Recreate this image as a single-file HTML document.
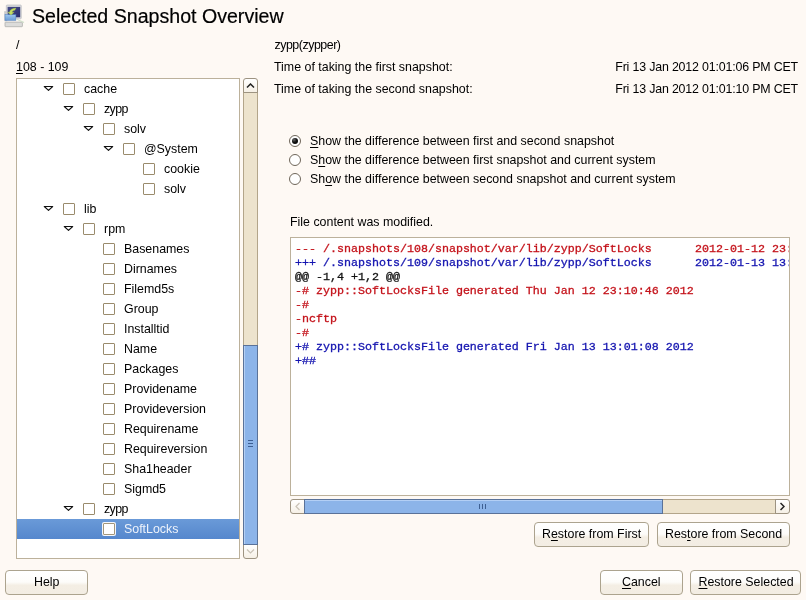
<!DOCTYPE html>
<html><head><meta charset="utf-8">
<style>
*{margin:0;padding:0;box-sizing:border-box}
html,body{width:806px;height:600px;overflow:hidden;background:#fef9f4}
body{will-change:transform}
body{position:relative;font-family:"Liberation Sans",sans-serif;font-size:12.4px;color:#000}
.a{position:absolute;white-space:pre;line-height:1}
.u{text-decoration:underline;text-underline-offset:2px}
#title{left:32px;top:7px;font-size:19.6px;color:#000;-webkit-text-stroke:0.2px #000}
#tree{position:absolute;left:16px;top:78px;width:224px;height:481px;border:1px solid #bcb19b;background:#fff;overflow:hidden}
.row{position:absolute;left:0;width:222px;height:20px}
.row.sel{background:linear-gradient(#6a9ad8,#5587cd)}
.cb{position:absolute;top:4px;width:12px;height:12px;border:1px solid #9a8b6c;border-radius:1px;background:#fff}
.sel .cb{border-color:#a3967a;background:#fff;box-shadow:0 0 0 1px #f4f6fb}
.ex{position:absolute;top:5px}
.tx{position:absolute;top:3px;line-height:14px;white-space:pre}
.sel .tx{color:#eef3fb}
#vsb{position:absolute;left:243px;top:78px;width:15px;height:481px}
.trough{position:absolute;background:#ede3cd;border:1px solid #b3a58a}
.thumb{position:absolute;background:#8cb4e9;border:1px solid #5a7299}
#vsb .thumb{box-shadow:inset 1px 0 0 #b3cff5}
#hsb .thumb{box-shadow:inset 0 1px 0 #b3cff5}
.arrowbtn{position:absolute;background:linear-gradient(#fff,#f6f0e6);border:1px solid #9d9381}
.radio{position:absolute;width:12px;height:12px;border-radius:50%;border:1px solid #6f665a;background:#fff}
.radio.on:after{content:"";position:absolute;left:2px;top:2px;width:6px;height:6px;border-radius:50%;background:radial-gradient(circle at 35% 30%,#666 0,#111 45%,#000 100%)}
#diff{position:absolute;left:290px;top:237px;width:500px;height:259px;border:1px solid #bcb19b;background:#fff;overflow:hidden}
.dl{position:absolute;left:4px;font-family:"Liberation Mono",monospace;font-size:11.67px;line-height:14px;white-space:pre;-webkit-text-stroke:0.3px currentColor}
.r{color:#c4121a}.b{color:#1414b0}.k{color:#111}
.btn{position:absolute;height:25px;border:1px solid #aca38e;border-radius:4px;background:linear-gradient(#fff 0%,#fdfcfa 48%,#f4eee4 62%,#f3ede3 100%)}
.btn>span{position:absolute;white-space:pre;line-height:1}
</style></head><body>

<svg class="a" style="left:0;top:0" width="30" height="30" viewBox="0 0 30 30">
  <defs>
    <linearGradient id="scr" x1="0" y1="0" x2="1" y2="1"><stop offset="0" stop-color="#454a88"/><stop offset="1" stop-color="#2a2e6c"/></linearGradient>
    <linearGradient id="fold" x1="0" y1="0" x2="0" y2="1"><stop offset="0" stop-color="#9cc6ee"/><stop offset="1" stop-color="#6a9ad4"/></linearGradient>
  </defs>
  <rect x="6.3" y="5" width="15" height="13.8" rx="0.8" fill="#d9dadc" stroke="#b4b6ba" stroke-width="0.6"/>
  <rect x="7.6" y="6.9" width="12.6" height="10.4" fill="url(#scr)"/>
  <rect x="4.2" y="11.2" width="3" height="10" fill="#c9cacc"/>
  <rect x="5" y="14.7" width="10.9" height="5.7" fill="url(#fold)" stroke="#4f80bf" stroke-width="0.5"/>
  <path d="M9.6 12.2 C9.8 10 11.5 8.6 16 8 L14.9 10.2 C13 10.4 12.3 11.2 12.2 12.2 L14.2 12.2 L11 15 L7.6 12.2 Z" fill="#c2dc62" stroke="#a4c048" stroke-width="0.3"/>
  <rect x="5" y="22.1" width="17.4" height="4.6" rx="0.6" fill="#dcdcda" stroke="#a7a7a5" stroke-width="0.7"/>
  <path d="M16.5 19 L19.5 20.5 L24 22.5" stroke="#cfe0c8" stroke-width="1.3" fill="none"/>
</svg>
<div id="title" class="a">Selected Snapshot Overview</div>

<div class="a" style="left:16px;top:39px">/</div>
<div class="a" style="left:16px;top:60.5px"><span class="u">1</span>08 - 109</div>

<div id="tree">
<div class="row" style="top:0px"><svg class="ex" style="left:25px" width="12" height="8" viewBox="0 0 12 8"><path d="M2.3 2.5 L10.7 2.5 L6.5 6.4 Z" fill="none" stroke="#111" stroke-width="1.15" stroke-linejoin="round"/></svg><div class="cb" style="left:46px"></div><div class="tx" style="left:67px">cache</div></div>
<div class="row" style="top:20px"><svg class="ex" style="left:45px" width="12" height="8" viewBox="0 0 12 8"><path d="M2.3 2.5 L10.7 2.5 L6.5 6.4 Z" fill="none" stroke="#111" stroke-width="1.15" stroke-linejoin="round"/></svg><div class="cb" style="left:66px"></div><div class="tx" style="left:87px;letter-spacing:-0.6px">zypp</div></div>
<div class="row" style="top:40px"><svg class="ex" style="left:65px" width="12" height="8" viewBox="0 0 12 8"><path d="M2.3 2.5 L10.7 2.5 L6.5 6.4 Z" fill="none" stroke="#111" stroke-width="1.15" stroke-linejoin="round"/></svg><div class="cb" style="left:86px"></div><div class="tx" style="left:107px">solv</div></div>
<div class="row" style="top:60px"><svg class="ex" style="left:85px" width="12" height="8" viewBox="0 0 12 8"><path d="M2.3 2.5 L10.7 2.5 L6.5 6.4 Z" fill="none" stroke="#111" stroke-width="1.15" stroke-linejoin="round"/></svg><div class="cb" style="left:106px"></div><div class="tx" style="left:127px">@System</div></div>
<div class="row" style="top:80px"><div class="cb" style="left:126px"></div><div class="tx" style="left:147px">cookie</div></div>
<div class="row" style="top:100px"><div class="cb" style="left:126px"></div><div class="tx" style="left:147px">solv</div></div>
<div class="row" style="top:120px"><svg class="ex" style="left:25px" width="12" height="8" viewBox="0 0 12 8"><path d="M2.3 2.5 L10.7 2.5 L6.5 6.4 Z" fill="none" stroke="#111" stroke-width="1.15" stroke-linejoin="round"/></svg><div class="cb" style="left:46px"></div><div class="tx" style="left:67px">lib</div></div>
<div class="row" style="top:140px"><svg class="ex" style="left:45px" width="12" height="8" viewBox="0 0 12 8"><path d="M2.3 2.5 L10.7 2.5 L6.5 6.4 Z" fill="none" stroke="#111" stroke-width="1.15" stroke-linejoin="round"/></svg><div class="cb" style="left:66px"></div><div class="tx" style="left:87px">rpm</div></div>
<div class="row" style="top:160px"><div class="cb" style="left:86px"></div><div class="tx" style="left:107px">Basenames</div></div>
<div class="row" style="top:180px"><div class="cb" style="left:86px"></div><div class="tx" style="left:107px">Dirnames</div></div>
<div class="row" style="top:200px"><div class="cb" style="left:86px"></div><div class="tx" style="left:107px">Filemd5s</div></div>
<div class="row" style="top:220px"><div class="cb" style="left:86px"></div><div class="tx" style="left:107px">Group</div></div>
<div class="row" style="top:240px"><div class="cb" style="left:86px"></div><div class="tx" style="left:107px">Installtid</div></div>
<div class="row" style="top:260px"><div class="cb" style="left:86px"></div><div class="tx" style="left:107px">Name</div></div>
<div class="row" style="top:280px"><div class="cb" style="left:86px"></div><div class="tx" style="left:107px">Packages</div></div>
<div class="row" style="top:300px"><div class="cb" style="left:86px"></div><div class="tx" style="left:107px">Providename</div></div>
<div class="row" style="top:320px"><div class="cb" style="left:86px"></div><div class="tx" style="left:107px">Provideversion</div></div>
<div class="row" style="top:340px"><div class="cb" style="left:86px"></div><div class="tx" style="left:107px">Requirename</div></div>
<div class="row" style="top:360px"><div class="cb" style="left:86px"></div><div class="tx" style="left:107px">Requireversion</div></div>
<div class="row" style="top:380px"><div class="cb" style="left:86px"></div><div class="tx" style="left:107px">Sha1header</div></div>
<div class="row" style="top:400px"><div class="cb" style="left:86px"></div><div class="tx" style="left:107px">Sigmd5</div></div>
<div class="row" style="top:420px"><svg class="ex" style="left:45px" width="12" height="8" viewBox="0 0 12 8"><path d="M2.3 2.5 L10.7 2.5 L6.5 6.4 Z" fill="none" stroke="#111" stroke-width="1.15" stroke-linejoin="round"/></svg><div class="cb" style="left:66px"></div><div class="tx" style="left:87px;letter-spacing:-0.6px">zypp</div></div>
<div class="row sel" style="top:440px"><div class="cb" style="left:86px"></div><div class="tx" style="left:107px">SoftLocks</div></div>
</div>

<div id="vsb">
  <div class="trough" style="left:0;top:13px;width:15px;height:454px"></div>
  <div class="arrowbtn" style="left:0;top:0;width:15px;height:15px;border-radius:3px 3px 0 0"></div>
  <svg class="a" style="left:3px;top:5px" width="9" height="5" viewBox="0 0 9 5"><path d="M1 4.5 L4.5 1 L8 4.5" fill="none" stroke="#222" stroke-width="1.5"/></svg>
  <div class="arrowbtn" style="left:0;top:466px;width:15px;height:15px;border-radius:0 0 3px 3px"></div>
  <svg class="a" style="left:3px;top:471px" width="9" height="5" viewBox="0 0 9 5"><path d="M1 0.5 L4.5 4 L8 0.5" fill="none" stroke="#c9c2b6" stroke-width="1.2"/></svg>
  <div class="thumb" style="left:0;top:267px;width:15px;height:200px"></div>
  <div class="a" style="left:5px;top:362px;width:5px;height:1px;background:#3d5f93"></div>
  <div class="a" style="left:5px;top:365px;width:5px;height:1px;background:#3d5f93"></div>
  <div class="a" style="left:5px;top:368px;width:5px;height:1px;background:#3d5f93"></div>
</div>

<div class="a" style="left:274.5px;top:38.5px;letter-spacing:-0.47px">zypp(zypper)</div>
<div class="a" style="left:274px;top:60.5px">Time of taking the first snapshot:</div>
<div class="a" style="left:274px;top:83px">Time of taking the second snapshot:</div>
<div class="a" style="right:8px;top:60.5px;letter-spacing:-0.17px">Fri 13 Jan 2012 01:01:06 PM CET</div>
<div class="a" style="right:8px;top:83px;letter-spacing:-0.17px">Fri 13 Jan 2012 01:01:10 PM CET</div>

<div class="radio on" style="left:289px;top:135px"></div>
<div class="radio" style="left:289px;top:154px"></div>
<div class="radio" style="left:289px;top:173px"></div>
<div class="a" style="left:310px;top:135px"><span class="u">S</span>how the difference between first and second snapshot</div>
<div class="a" style="left:310px;top:154px">S<span class="u">h</span>ow the difference between first snapshot and current system</div>
<div class="a" style="left:310px;top:173px">Sh<span class="u">o</span>w the difference between second snapshot and current system</div>

<div class="a" style="left:290px;top:216px">File content was modified.</div>

<div id="diff">
<div class="dl r" style="top:4px">--- /.snapshots/108/snapshot/var/lib/zypp/SoftLocks</div><div class="dl r" style="left:404px;top:4px">2012-01-12 23:10:46.000000000 +0100</div>
<div class="dl b" style="top:18px">+++ /.snapshots/109/snapshot/var/lib/zypp/SoftLocks</div><div class="dl b" style="left:404px;top:18px">2012-01-13 13:01:08.000000000 +0100</div>
<div class="dl k" style="top:32px">@@ -1,4 +1,2 @@</div>
<div class="dl r" style="top:46px">-# zypp::SoftLocksFile generated Thu Jan 12 23:10:46 2012</div>
<div class="dl r" style="top:60px">-#</div>
<div class="dl r" style="top:74px">-ncftp</div>
<div class="dl r" style="top:88px">-#</div>
<div class="dl b" style="top:102px">+# zypp::SoftLocksFile generated Fri Jan 13 13:01:08 2012</div>
<div class="dl b" style="top:116px">+##</div>
</div>

<div id="hsb" style="position:absolute;left:290px;top:499px;width:500px;height:15px">
  <div class="trough" style="left:13px;top:0;width:474px;height:15px"></div>
  <div class="arrowbtn" style="left:0;top:0;width:15px;height:15px;border-radius:3px 0 0 3px"></div>
  <svg class="a" style="left:5px;top:3px" width="5" height="9" viewBox="0 0 5 9"><path d="M4.5 1 L1 4.5 L4.5 8" fill="none" stroke="#c9c2b6" stroke-width="1.2"/></svg>
  <div class="thumb" style="left:14px;top:0;width:359px;height:15px"></div>
  <div class="a" style="left:189px;top:5px;width:1px;height:5px;background:#3d5f93"></div>
  <div class="a" style="left:192px;top:5px;width:1px;height:5px;background:#3d5f93"></div>
  <div class="a" style="left:195px;top:5px;width:1px;height:5px;background:#3d5f93"></div>
  <div class="arrowbtn" style="left:485px;top:0;width:15px;height:15px;border-radius:0 3px 3px 0"></div>
  <svg class="a" style="left:490px;top:3px" width="5" height="9" viewBox="0 0 5 9"><path d="M0.5 1 L4 4.5 L0.5 8" fill="none" stroke="#222" stroke-width="1.5"/></svg>
</div>

<div class="btn" style="left:534px;top:522px;width:115px"><span style="left:7px;top:5px">R<span class="u">e</span>store from First</span></div>
<div class="btn" style="left:657px;top:522px;width:133px"><span style="left:7px;top:5px">Res<span class="u">t</span>ore from Second</span></div>

<div class="btn" style="left:5px;top:570px;width:83px"><span style="left:28px;top:5px">Help</span></div>
<div class="btn" style="left:600px;top:570px;width:83px"><span style="left:21px;top:5px"><span class="u">C</span>ancel</span></div>
<div class="btn" style="left:690px;top:570px;width:111px"><span style="left:7.5px;top:5px"><span class="u">R</span>estore Selected</span></div>

</body></html>
